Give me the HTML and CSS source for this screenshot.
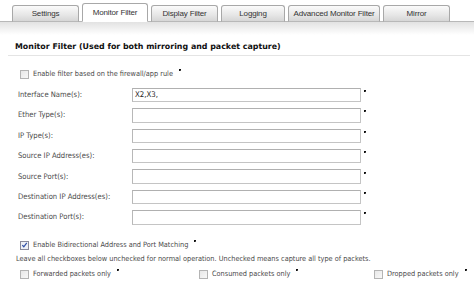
FILE: index.html
```html
<!DOCTYPE html>
<html>
<head>
<meta charset="utf-8">
<link rel="stylesheet" href="styles.css">
</head>
<body>
<div class="tabs">
  <div class="tab w67">Settings</div>
  <div class="tab active w66">Monitor Filter</div>
  <div class="tab w67">Display Filter</div>
  <div class="tab w64">Logging</div>
  <div class="tab w92">Advanced Monitor Filter</div>
  <div class="tab w67">Mirror</div>
</div>
<div class="band"></div>
<div class="section">
  <h2 class="title">Monitor Filter (Used for both mirroring and packet capture)</h2>
  <div class="check-row first"><span class="cb"></span><span>Enable filter based on the firewall/app rule</span><span class="mark"></span></div>
  <div class="form">
    <label>Interface Name(s):</label><div class="input">X2,X3,</div><span class="mark"></span>
    <label>Ether Type(s):</label><div class="input"></div><span class="mark"></span>
    <label>IP Type(s):</label><div class="input"></div><span class="mark"></span>
    <label>Source IP Address(es):</label><div class="input"></div><span class="mark"></span>
    <label>Source Port(s):</label><div class="input"></div><span class="mark"></span>
    <label>Destination IP Address(es):</label><div class="input"></div><span class="mark"></span>
    <label>Destination Port(s):</label><div class="input"></div><span class="mark"></span>
  </div>
  <div class="check-row bidir"><span class="cb checked"><svg viewBox="0 0 8 8" width="8" height="8"><path d="M1.5 4.2 L3.2 6 L6.6 1.6" fill="none" stroke="#2f4fa8" stroke-width="1.4"/></svg></span><span>Enable Bidirectional Address and Port Matching</span><span class="mark"></span></div>
  <div class="note">Leave all checkboxes below unchecked for normal operation. Unchecked means capture all type of packets.</div>
  <div class="bottom-row">
    <div class="check-row c1"><span class="cb"></span><span>Forwarded packets only</span><span class="mark"></span></div>
    <div class="check-row c2"><span class="cb"></span><span>Consumed packets only</span><span class="mark"></span></div>
    <div class="check-row c3"><span class="cb"></span><span>Dropped packets only</span><span class="mark"></span></div>
  </div>
</div>
</body>
</html>
```
FILE: styles.css
```css
html, body {
  margin: 0;
  padding: 0;
  background: #fff;
  width: 474px;
  height: 286px;
  overflow: hidden;
}
body {
  font-family: "DejaVu Sans Condensed", "DejaVu Sans", sans-serif;
  font-size: 7.3px;
  color: #4a4a4a;
}
.tabs {
  display: flex;
  gap: 3px;
  padding-left: 12px;
  align-items: flex-end;
  border-bottom: 1px solid #b8b8b8;
  box-sizing: border-box;
  height: 22px;
}
.tab {
  box-sizing: border-box;
  height: 17px;
  margin-bottom: -1px;
  border: 1px solid #a8a8a8;
  border-bottom: 1px solid #b8b8b8;
  border-radius: 3px 3px 0 0;
  background: linear-gradient(#fbfbfb, #e6e6e6 60%, #d6d6d6);
  font-family: "Liberation Sans", Arial, sans-serif;
  font-size: 8px;
  letter-spacing: -0.15px;
  color: #333;
  display: flex;
  align-items: center;
  justify-content: center;
  white-space: nowrap;
}
.tab.active {
  height: 19px;
  background: #fff;
  border-bottom-color: #fff;
}
.w67 { width: 67px; }
.w66 { width: 66px; }
.w64 { width: 64px; }
.w92 { width: 92px; }
.band {
  height: 13px;
  background: linear-gradient(#e2e2e2, #fff);
}
.section {
  padding: 0 4px 0 8px;
}
.title {
  margin: 6px 0 0 0;
  padding: 0 0 3px 7px;
  font-family: "DejaVu Sans", Verdana, sans-serif;
  font-weight: bold;
  font-size: 7.9px;
  color: #111;
  border-bottom: 1px solid #e4e4e4;
  line-height: 11px;
}
.check-row {
  display: flex;
  align-items: center;
  gap: 4px;
  line-height: 10px;
  white-space: nowrap;
}
.check-row.first {
  margin: 13px 0 0 12px;
}
.cb {
  box-sizing: border-box;
  width: 9px;
  height: 9px;
  border: 1px solid #b4b4b4;
  background: linear-gradient(135deg, #e8e8e8, #f8f8f8);
  display: inline-flex;
  align-items: center;
  justify-content: center;
  flex: none;
}
.cb.checked {
  border-color: #8a8a9a;
  background: #eef0f6;
}
.mark {
  width: 2px;
  height: 2px;
  background: #111;
  align-self: flex-start;
  margin-left: 2px;
  margin-top: 0;
  border-radius: 0 0 1px 0;
}
.form {
  display: grid;
  grid-template-columns: 114px 229px auto;
  grid-auto-rows: 14px;
  row-gap: 6.4px;
  margin: 9px 0 0 10px;
  align-items: center;
}
.form label {
  line-height: 14px;
  font-size: 7.6px;
}
.form .mark {
  margin-left: 3px;
  margin-top: 2px;
}
.input {
  box-sizing: border-box;
  height: 14.5px;
  border: 1px solid #c4c4c4;
  border-top-color: #b0b0b0;
  border-left-color: #b8b8b8;
  background: #fff;
  font-family: "DejaVu Sans Condensed", "DejaVu Sans", sans-serif;
  font-size: 7.8px;
  color: #222;
  padding-left: 2px;
  line-height: 12px;
}
.check-row.bidir {
  margin: 16px 0 0 12px;
}
.note {
  margin: 4px 0 0 8px;
  line-height: 10px;
  white-space: nowrap;
}
.bottom-row {
  display: flex;
  margin: 5px 0 0 12px;
}
.c1 { width: 179px; }
.c2 { width: 175px; }
```
